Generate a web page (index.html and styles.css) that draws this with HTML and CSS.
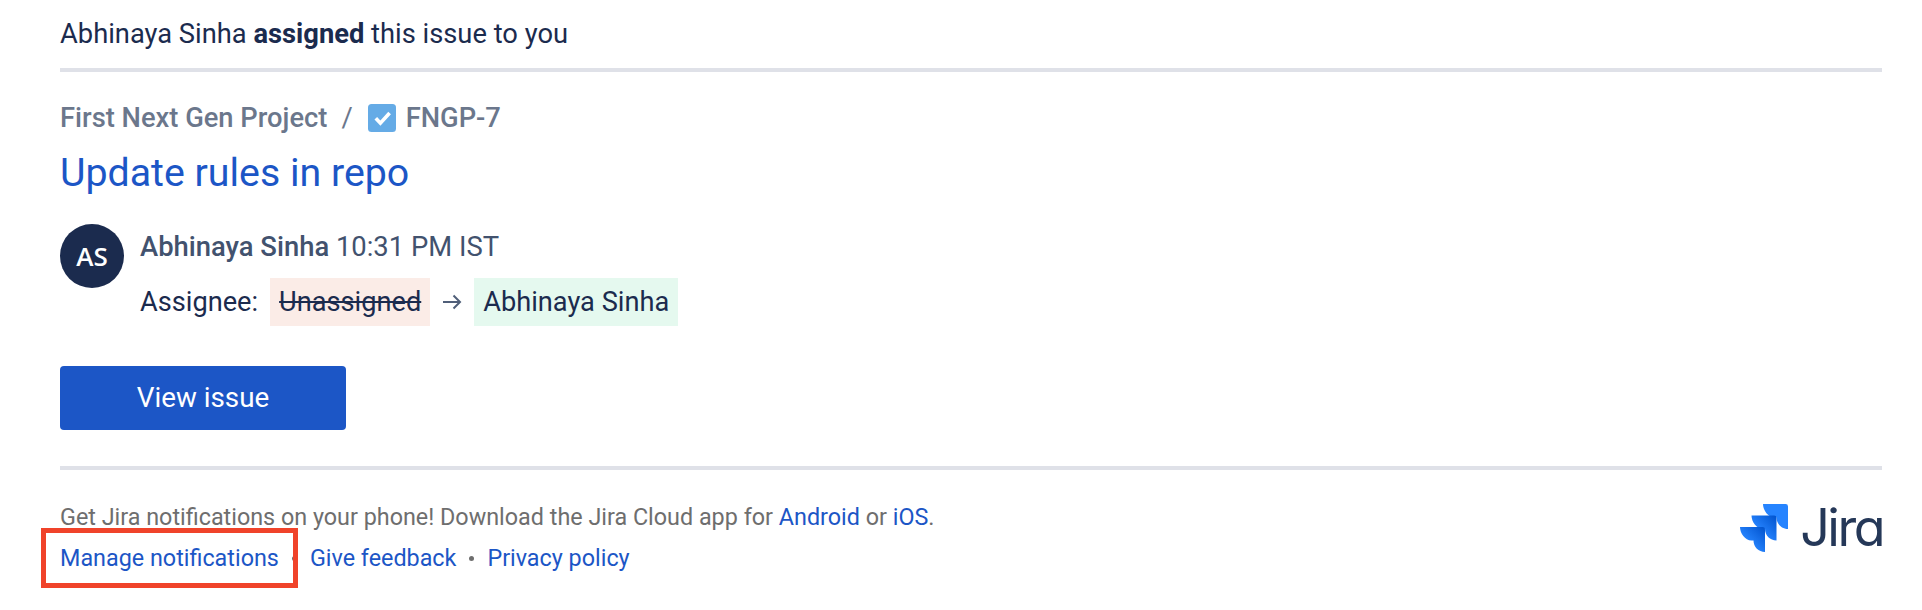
FILE: index.html
```html
<!DOCTYPE html>
<html lang="en">
<head>
<meta charset="utf-8">
<title>Update rules in repo</title>
<link rel="stylesheet" href="styles.css">
</head>
<body>
<main class="mail">
  <p class="headline">Abhinaya Sinha <strong>assigned</strong> this issue to you</p>
  <hr class="rule">
  <div class="crumbs">
    <span>First Next Gen Project</span>
    <span class="slash">/</span>
    <svg class="task-icon" viewBox="0 0 28 28" aria-hidden="true"><rect width="28" height="28" rx="3.5" fill="#65ABE6"/><path d="M7.8 14.2l4.6 5L21.6 9" fill="none" stroke="#fff" stroke-width="3.6"/></svg>
    <span>FNGP-7</span>
  </div>
  <h1 class="title">Update rules in repo</h1>
  <section class="change">
    <div class="avatar">AS</div>
    <div class="change-body">
      <div class="meta"><strong>Abhinaya Sinha</strong> 10:31 PM IST</div>
      <div class="diff">
        <span class="label">Assignee:</span>
        <del class="old">Unassigned</del>
        <svg class="arrow" viewBox="0 0 20 16" aria-hidden="true"><path d="M1 8h17M11.5 1.5L18 8l-6.5 6.5" fill="none" stroke="#505F79" stroke-width="2"/></svg>
        <ins class="new">Abhinaya Sinha</ins>
      </div>
    </div>
  </section>
  <a class="button" href="#">View issue</a>
  <hr class="rule rule-footer">
  <footer class="footer">
    <div class="footer-text">
      <p class="promo">Get Jira notifications on your phone! Download the Jira Cloud app for <a href="#">Android</a> or <a href="#">iOS</a>.</p>
      <p class="links">
        <a class="manage" href="#">Manage notifications</a>
        <span class="dot"></span>
        <a href="#">Give feedback</a>
        <span class="dot"></span>
        <a href="#">Privacy policy</a>
      </p>
    </div>
    <div class="logo">
      <svg class="logo-mark" viewBox="0 0 48 48" aria-hidden="true">
        <defs>
          <linearGradient id="g1" x1="1" y1="0" x2="0.35" y2="0.65"><stop offset="0" stop-color="#0052CC"/><stop offset="1" stop-color="#2684FF"/></linearGradient>
        </defs>
        <path d="M23 0H45.6Q48 0 48 2.4V25C41.6 25 36.500 19.900 36.500 13.500H34.500C28 13.500 23 6 23 0Z" fill="#2684FF"/>
        <path d="M11.500 11.500H34.100Q36.500 11.500 36.500 13.900V36.500C30.100 36.500 25 31.400 25 25H23C16.500 25 11.500 17.500 11.500 11.500Z" fill="url(#g1)"/>
        <path d="M0 23H22.600Q25 23 25 25.400V48C18.600 48 13.500 42.900 13.500 36.500H11.500C5 36.500 0 29 0 23Z" fill="url(#g1)"/>
      </svg>
      <span class="wordmark">Jira</span>
    </div>
  </footer>
</main>
</body>
</html>
```
FILE: styles.css
```css
*, *::after { box-sizing: border-box; }
html, body { margin: 0; padding: 0; background: #fff; }
body { font-family: Roboto, "Liberation Sans", sans-serif; color: #172B4D; overflow: hidden; }
p, h1 { margin: 0; }
a { text-decoration: none; color: #1C56C6; }

.mail { padding: 0 40px 0 60px; height: 610px; position: relative; }
.headline { height: 68px; padding-top: 19px; font-size: 27.3px; line-height: 30px; color: #1B2B4E; }
.headline strong { font-weight: 700; }

.rule { margin: 0; border: 0; height: 4px; background: #DFE1E8; }

.crumbs { display: flex; align-items: center; margin-top: 32px; height: 28px; font-size: 27.3px; font-weight: 500; color: #6B778C; }
.slash { margin: 0 15px 0 14px; font-weight: 400; }
.task-icon { width: 28px; height: 28px; margin-right: 10px; flex: none; }

.title { margin-top: 17px; font-size: 39.3px; line-height: 48px; font-weight: 400; color: #1C56C6; }

.change { display: flex; margin-top: 27px; }
.avatar { width: 64px; height: 64px; border-radius: 50%; background: #1B2B4E; color: #fff; font-family: "Open Sans", sans-serif; font-size: 26px; font-weight: 600; display: flex; align-items: center; justify-content: center; flex: none; }
.change-body { margin-left: 16px; }
.meta { height: 30px; margin-top: 8px; font-size: 27.4px; line-height: 30px; color: #42526E; }
.meta strong { font-weight: 500; }
.diff { display: flex; align-items: center; margin-top: 16px; font-size: 27.2px; height: 48px; }
.label { margin-right: 12px; color: #1B2B4E; }
.old, .new { display: block; height: 48px; line-height: 48px; padding: 0 9px; color: #1B2B4E; }
.old { background: #FBECE7; text-decoration: line-through; }
.new { background: #E5F9EF; text-decoration: none; }
.arrow { width: 20px; height: 16px; margin: 0 12px; flex: none; }

.button { display: block; width: 286px; height: 64px; margin-top: 40px; border-radius: 4px; background: #1C56C6; color: #fff; font-size: 27.8px; line-height: 64px; text-align: center; }

.rule-footer { margin-top: 36px; }

.footer { display: flex; justify-content: space-between; align-items: flex-start; margin-top: 33px; }
.footer-text { font-size: 23.35px; line-height: 28px; color: #6E6E6E; }
.promo { height: 41px; }
.links { display: flex; align-items: center; position: relative; }
.dot { width: 5px; height: 5px; border-radius: 50%; background: #6E6E6E; margin: 0 13px; }
.manage::after { content: ""; position: absolute; left: -19px; top: -16px; width: 257px; height: 60px; border: 5px solid #F0432A; }

.logo { display: flex; align-items: center; margin-top: 1px; margin-right: -1px; }
.logo-mark { width: 48px; height: 48px; flex: none; }
.wordmark { margin-left: 12px; font-family: Inter, sans-serif; font-size: 52px; letter-spacing: -2.5px; line-height: 48px; font-weight: 400; color: #253858; font-feature-settings: "cv11" 1; }
```
